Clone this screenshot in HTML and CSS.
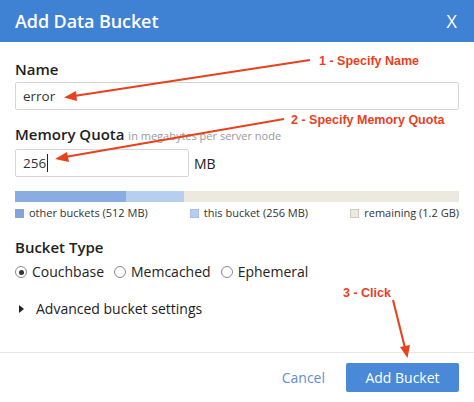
FILE: index.html
```html
<!DOCTYPE html>
<html>
<head>
<meta charset="utf-8">
<link rel="stylesheet" href="styles.css">
</head>
<body>
<div class="dialog">
  <div class="header">
    <span class="title">Add Data Bucket</span>
    <span class="close">X</span>
  </div>
  <div class="content">
    <div class="label label-first">Name</div>
    <div class="input input-full">error</div>

    <div class="label label-memory">Memory Quota <span class="hint">in megabytes per server node</span></div>
    <div class="quota-row">
      <div class="input input-quota">256<span class="caret"></span></div>
      <span class="unit">MB</span>
    </div>

    <div class="bar">
      <div class="seg seg-other" style="width:111px"></div>
      <div class="seg seg-this" style="width:58px"></div>
      <div class="seg seg-rest"></div>
    </div>
    <div class="legend">
      <span class="legend-item"><span class="sq sq-other"></span>other buckets (512 MB)</span>
      <span class="legend-item"><span class="sq sq-this"></span>this bucket (256 MB)</span>
      <span class="legend-item"><span class="sq sq-rest"></span>remaining (1.2 GB)</span>
    </div>

    <div class="label label-type">Bucket Type</div>
    <div class="radios">
      <span class="radio-item"><span class="radio checked"></span>Couchbase</span>
      <span class="radio-item"><span class="radio"></span>Memcached</span>
      <span class="radio-item"><span class="radio"></span>Ephemeral</span>
    </div>

    <div class="advanced"><span class="tri"></span>Advanced bucket settings</div>
  </div>
  <div class="footer">
    <span class="cancel">Cancel</span>
    <span class="btn">Add Bucket</span>
  </div>

  <svg class="annotations" width="474" height="402" viewBox="0 0 474 402">
    <g fill="#e8411e" stroke="#e8411e">
      <line x1="310" y1="60" x2="74" y2="96" stroke-width="2"/>
      <polygon points="64,97.5 76,91 77,101" stroke="none"/>
      <line x1="284" y1="119" x2="65" y2="157" stroke-width="2"/>
      <polygon points="55,159 67,152 69,162" stroke="none"/>
      <line x1="393" y1="300" x2="405" y2="348" stroke-width="2"/>
      <polygon points="407.5,358 400,347 410,345" stroke="none"/>
    </g>
    <g class="ann-text">
      <text x="319" y="65">1 - Specify Name</text>
      <text x="291" y="124">2 - Specify Memory Quota</text>
      <text x="343" y="297">3 - Click</text>
    </g>
  </svg>
</div>
</body>
</html>
```

FILE: styles.css
```css
* { box-sizing: border-box; }
html, body { margin: 0; padding: 0; background: #fff; }
body { font-family: "Open Sans", "Noto Sans", sans-serif; color: #222; }

.dialog {
  position: relative;
  width: 474px;
  height: 402px;
  overflow: hidden;
  background: #fff;
}

.header {
  height: 42px;
  background: #3f81d3;
  color: #fff;
  display: flex;
  align-items: center;
  justify-content: space-between;
  padding: 0 17px 0 15px;
}
.title { font-size: 18px; font-weight: 600; letter-spacing: -0.1px; }
.close { font-size: 18px; font-weight: 400; }

.content { padding: 0 15px; }

.label {
  font-size: 15px;
  font-weight: 600;
  line-height: 20px;
  color: #1e1e1e;
}
.label-first { margin-top: 17px; }
.label-memory { margin-top: 14px; }
.hint { font-size: 11px; font-weight: 400; color: #9a9a9a; }

.input {
  height: 28px;
  border: 1px solid #d6d6d6;
  border-radius: 2px;
  font-size: 13.5px;
  line-height: 26px;
  padding-left: 7px;
  color: #333;
  margin-top: 3px;
}
.input-full { width: 444px; }
.quota-row { display: flex; align-items: center; margin-top: 3px; }
.quota-row .input { margin-top: 0; }
.input-quota { width: 174px; display: flex; align-items: center; }
.caret { display: inline-block; width: 1px; height: 18px; background: #222; margin-left: 1px; }
.unit { font-size: 14px; margin-left: 5px; color: #222; }

.bar { display: flex; height: 11px; width: 444px; margin-top: 14px; }
.seg-other { background: #89ade2; }
.seg-this { background: #b7cfef; }
.seg-rest { flex: 1; background: #ece9e1; }

.legend {
  display: flex;
  justify-content: space-between;
  margin-top: 3px;
  font-size: 11px;
  line-height: 16px;
  color: #333;
  width: 444px;
}
.legend-item { display: flex; align-items: center; }
.sq { width: 9px; height: 9px; margin-right: 5px; border: 1px solid; }
.sq-other { background: #7fa5dc; border-color: #7fa5dc; }
.sq-this { background: #b7cfef; border-color: #a6c0e6; }
.sq-rest { background: #ece9e1; border-color: #cfcbc2; }

.label-type { margin-top: 16px; }

.radios { display: flex; margin-top: 5px; font-size: 14px; line-height: 20px; color: #222; }
.radio-item { display: flex; align-items: center; margin-right: 10px; }
.radio {
  width: 12px; height: 12px;
  border: 1px solid #8a8a8a;
  border-radius: 50%;
  margin-right: 5px;
  position: relative;
}
.radio.checked::after {
  content: "";
  position: absolute;
  left: 2.5px; top: 2.5px;
  width: 5px; height: 5px;
  border-radius: 50%;
  background: #333;
}

.advanced {
  display: flex;
  align-items: center;
  margin-top: 17px;
  font-size: 14px;
  line-height: 20px;
  color: #222;
}
.tri {
  width: 0; height: 0;
  border-top: 4.5px solid transparent;
  border-bottom: 4.5px solid transparent;
  border-left: 5px solid #222;
  margin: 0 12px 0 4px;
}

.footer {
  position: absolute;
  left: 0; right: 0; top: 352px;
  border-top: 1px solid #e6e6e6;
  display: flex;
  justify-content: flex-end;
  align-items: center;
  padding: 10px 15px 0 0;
}
.cancel { font-size: 14px; color: #5d8fd1; margin-right: 21px; }
.btn {
  width: 113px; height: 29px;
  background: #4a89d8;
  color: #fff;
  border-radius: 2px;
  font-size: 14px;
  display: flex; align-items: center; justify-content: center;
}

.annotations { position: absolute; left: 0; top: 0; pointer-events: none; }
.ann-text { font-family: "Liberation Sans", Arial, sans-serif; font-weight: 700; font-size: 12.5px; fill: #e8411e; }
```
